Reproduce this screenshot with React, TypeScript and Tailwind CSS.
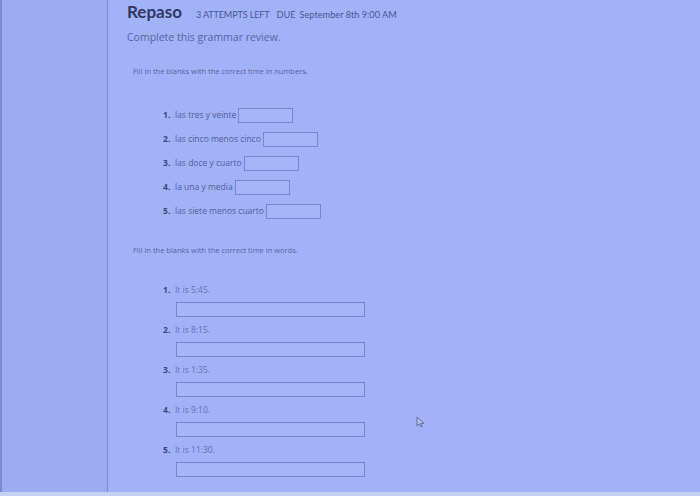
import React from "react";

const numberItems = [
  { label: "las tres y veinte" },
  { label: "las cinco menos cinco" },
  { label: "las doce y cuarto" },
  { label: "la una y media" },
  { label: "las siete menos cuarto" },
];

const wordItems = ["It is 5:45.", "It is 8:15.", "It is 1:35.", "It is 9:10.", "It is 11:30."];

function Cursor() {
  return (
    <svg width="9" height="12" viewBox="0 0 9 12" className="absolute left-[416px] top-[416px]">
      <path d="M1 1 L1 10 L3.3 7.8 L5 11 L6.3 10.4 L4.7 7.3 L8 7.3 Z" fill="#b9c4f6" stroke="#5a6499" strokeWidth="0.9" />
    </svg>
  );
}

export default function App() {
  return (
    <div
      className="relative flex h-[496px] w-[700px] flex-col overflow-hidden bg-[#a2b2f7] text-[#4f5b98]"
      style={{ fontFamily: "'Open Sans', Lato, sans-serif" }}
    >
      <div className="flex flex-1">
        {/* barra lateral */}
        <div className="w-[108px] shrink-0 border-l-2 border-r border-l-[#7d8ad6] border-r-[#7f8cd4] bg-[#9dacf1]" />

        <div className="flex-1 pl-[19px]">
          <div className="-mt-[1px] flex items-baseline" style={{ fontFamily: "Lato, 'Open Sans', sans-serif" }}>
            <span className="text-[17px] font-bold text-[#2f3866]">Repaso</span>
            <span className="ml-[14px] text-[9.2px] tracking-[-0.2px] text-[#4b5796]">3 ATTEMPTS LEFT</span>
            <span className="ml-[7px] text-[9.2px] text-[#4b5796]">DUE</span>
            <span className="ml-[4px] text-[9.2px] text-[#4b5796]">September 8th 9:00 AM</span>
          </div>
          <p className="mt-[5px] text-[10.5px] text-[#5663a3]">Complete this grammar review.</p>

          <p className="ml-[6px] mt-[21px] text-[7.5px] text-[#56629f]">
            Fill in the blanks with the correct time in numbers.
          </p>

          <ol className="ml-[36px] mt-[30px] flex flex-col gap-[9px]">
            {numberItems.map((item, i) => (
              <li key={item.label} className="flex h-[15px] items-center text-[8.5px]">
                <span className="w-[12px] font-bold text-[#3b4580]">{i + 1}.</span>
                <span className="text-[#515d9c]">{item.label}</span>
                <span className="ml-[2px] h-[15px] w-[55px] border border-[#7a86c9] bg-[#a6b5f7]" />
              </li>
            ))}
          </ol>

          <p className="ml-[6px] mt-[26px] text-[7.5px] text-[#56629f]">
            Fill in the blanks with the correct time in words.
          </p>

          <ol className="ml-[36px] mt-[29px] flex flex-col gap-[8px]">
            {wordItems.map((label, i) => (
              <li key={label} className="flex flex-col">
                <div className="flex h-[12px] items-center text-[8.5px]">
                  <span className="w-[12px] font-bold text-[#3b4580]">{i + 1}.</span>
                  <span className="text-[#6470ad]">{label}</span>
                </div>
                <span className="ml-[13px] mt-[5px] h-[15px] w-[189px] border border-[#7a86c9] bg-[#a6b5f7]" />
              </li>
            ))}
          </ol>
        </div>
      </div>
      <div className="h-[4px] bg-[#c6d0f6]" />
      <Cursor />
    </div>
  );
}
